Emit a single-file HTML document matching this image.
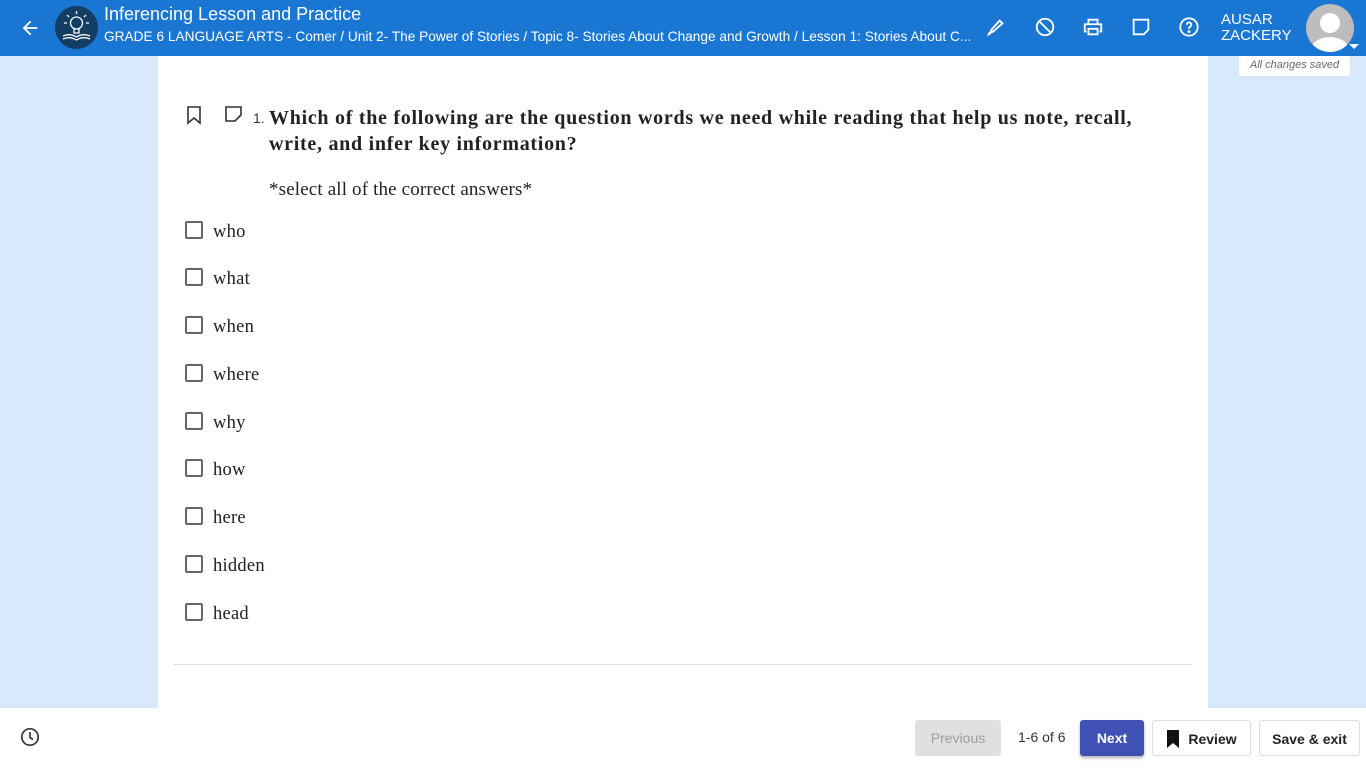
<!DOCTYPE html>
<html><head><meta charset="utf-8"><style>
*{margin:0;padding:0;box-sizing:border-box}
body{width:1366px;height:768px;overflow:hidden;background:#d7e9fa;font-family:"Liberation Sans",sans-serif;position:relative}
.hdr{position:absolute;left:0;top:0;width:1366px;height:56px;background:#1976d2;color:#fff}
.t1{position:absolute;left:104px;top:4px;font-size:18px}
.t2{position:absolute;left:104px;top:29px;font-size:13.7px;white-space:nowrap}
.logo{position:absolute;left:55px;top:6px;width:43px;height:43px;border-radius:50%;background:#143d63}
.ic{position:absolute;top:16px}
.name{position:absolute;left:1221px;top:12px;font-size:15px;line-height:16px}
.av{position:absolute;left:1306px;top:4px;width:48px;height:48px;border-radius:50%;background:#bdbdbd;overflow:hidden}
.panel{position:absolute;left:158px;top:56px;width:1050px;height:652px;background:#fff}
.saved{position:absolute;left:1239px;top:56px;width:111px;height:20px;background:#fff;border-radius:3px;font-size:11px;font-style:italic;color:#666;text-align:center;line-height:18px}
.q{position:absolute;left:269px;top:105px;width:940px;font-family:"Liberation Serif",serif;font-weight:bold;font-size:20px;letter-spacing:0.72px;line-height:26px;color:#222;white-space:nowrap}
.num{position:absolute;left:253px;top:110px;font-size:14px;color:#333}
.sel{position:absolute;left:269px;top:179px;font-family:"Liberation Serif",serif;font-size:19px;letter-spacing:0.15px;color:#222}
.opt{position:absolute;left:185px;font-family:"Liberation Serif",serif;font-size:18.5px;color:#222}
.opt i{position:absolute;left:0;top:1px;width:18px;height:18px;border:2px solid #666;border-radius:2px}
.opt span{position:absolute;left:28px;top:2px;white-space:nowrap;letter-spacing:0.25px}
.hr{position:absolute;left:174px;top:664px;width:1018px;height:1px;background:#ddd}
.ftr{position:absolute;left:0;top:708px;width:1366px;height:60px;background:#fff}
.btn{position:absolute;top:720px;height:36px;border-radius:3px;font-size:14px;font-weight:bold;line-height:36px;text-align:center}
</style></head><body>
<div class="hdr">
<svg style="position:absolute;left:19px;top:17px" width="22" height="22" viewBox="0 0 24 24"><path d="M20 11H7.8l5.6-5.6L12 4l-8 8 8 8 1.4-1.4L7.8 13H20z" fill="#fff"/></svg>
<div class="logo"><svg width="43" height="43" viewBox="0 0 43 43" fill="none" stroke="#fff" stroke-width="1.3"><circle cx="21.5" cy="17" r="6"/><path d="M19 23v4h5v-4M21.5 5v3M12 9l2 2M31 9l-2 2M9 17h3M31 17h3"/><path d="M8 30q7-3 13.5 1q6.5-4 13.5-1M8 33q7-3 13.5 1q6.5-4 13.5-1"/></svg></div>
<div class="t1">Inferencing Lesson and Practice</div>
<div class="t2">GRADE 6 LANGUAGE ARTS - Comer / Unit 2- The Power of Stories / Topic 8- Stories About Change and Growth / Lesson 1: Stories About C...</div>
<svg class="ic" style="left:985px" width="22" height="22" viewBox="0 0 24 24" fill="none" stroke="#fff" stroke-width="2"><path d="M4 20l2-1 1-4 9-10 3 3-10 9-4 1zM6 15l3 3"/></svg>
<svg class="ic" style="left:1034px" width="22" height="22" viewBox="0 0 24 24" fill="none" stroke="#fff" stroke-width="2"><circle cx="12" cy="12" r="9"/><path d="M5.6 5.6l12.8 12.8"/></svg>
<svg class="ic" style="left:1082px" width="22" height="22" viewBox="0 0 24 24" fill="none" stroke="#fff" stroke-width="2"><path d="M7 8V4h10v4M5 17H3v-8h18v8h-2M7 14h10v6H7z"/></svg>
<svg class="ic" style="left:1130px" width="22" height="22" viewBox="0 0 24 24" fill="none" stroke="#fff" stroke-width="2"><path d="M4 4h16v11l-5 5H4z"/></svg>
<svg class="ic" style="left:1178px" width="22" height="22" viewBox="0 0 24 24" fill="none" stroke="#fff" stroke-width="2"><circle cx="12" cy="12" r="9.5"/><path d="M9.5 9.5a2.5 2.5 0 1 1 3.5 2.3c-.7.4-1 1-1 1.7v.5"/><circle cx="12" cy="17" r=".6" fill="#fff"/></svg>
<div class="name">AUSAR<br>ZACKERY</div>
<div class="av"><svg width="48" height="48" viewBox="0 0 48 48"><circle cx="24" cy="19" r="10" fill="#fff"/><ellipse cx="24" cy="46" rx="19" ry="13" fill="#fff"/></svg></div>
<svg style="position:absolute;left:1349px;top:44px" width="10" height="6"><path d="M0 0h10L5 5z" fill="#fff"/></svg>
</div>
<div class="panel"></div>
<div class="saved">All changes saved</div>
<svg style="position:absolute;left:185px;top:105px" width="18" height="20" viewBox="0 0 18 20" fill="none" stroke="#333" stroke-width="1.6"><path d="M3 2h12v16l-6-5-6 5z"/></svg>
<svg style="position:absolute;left:224px;top:105px" width="20" height="18" viewBox="0 0 20 18" fill="none" stroke="#333" stroke-width="1.6"><path d="M2 2h15v8l-6 6H2z"/></svg>
<div class="num">1.</div>
<div class="q">Which of the following are the question words we need while reading that help us note, recall,<br>write, and infer key information?</div>
<div class="sel">*select all of the correct answers*</div>
<div class="opt" style="top:220px"><i></i><span>who</span></div>
<div class="opt" style="top:267px"><i></i><span>what</span></div>
<div class="opt" style="top:315px"><i></i><span>when</span></div>
<div class="opt" style="top:363px"><i></i><span>where</span></div>
<div class="opt" style="top:411px"><i></i><span>why</span></div>
<div class="opt" style="top:458px"><i></i><span>how</span></div>
<div class="opt" style="top:506px"><i></i><span>here</span></div>
<div class="opt" style="top:554px"><i></i><span>hidden</span></div>
<div class="opt" style="top:602px"><i></i><span>head</span></div>
<div class="hr"></div>
<div class="ftr"></div>
<svg style="position:absolute;left:20px;top:727px" width="20" height="20" viewBox="0 0 20 20" fill="none" stroke="#333" stroke-width="1.7"><circle cx="10" cy="10" r="8.2"/><path d="M10 5v5.5l3 2"/></svg>
<div class="btn" style="left:915px;width:86px;background:#e0e0e0;color:#9e9e9e;font-weight:normal">Previous</div>
<div style="position:absolute;left:1018px;top:729px;font-size:14px;color:#333">1-6 of 6</div>
<div class="btn" style="left:1080px;width:64px;background:#3f51b5;color:#fff;box-shadow:0 2px 3px rgba(0,0,0,.3)">Next</div>
<div class="btn" style="left:1152px;width:99px;border:1px solid #ddd;color:#222;background:#fff;padding-left:22px">Review</div>
<svg style="position:absolute;left:1167px;top:730px" width="12" height="18"><path d="M0 0h12v18l-6-5-6 5z" fill="#111"/></svg>
<div class="btn" style="left:1259px;width:101px;border:1px solid #ddd;color:#222;background:#fff">Save &amp; exit</div>
</body></html>
